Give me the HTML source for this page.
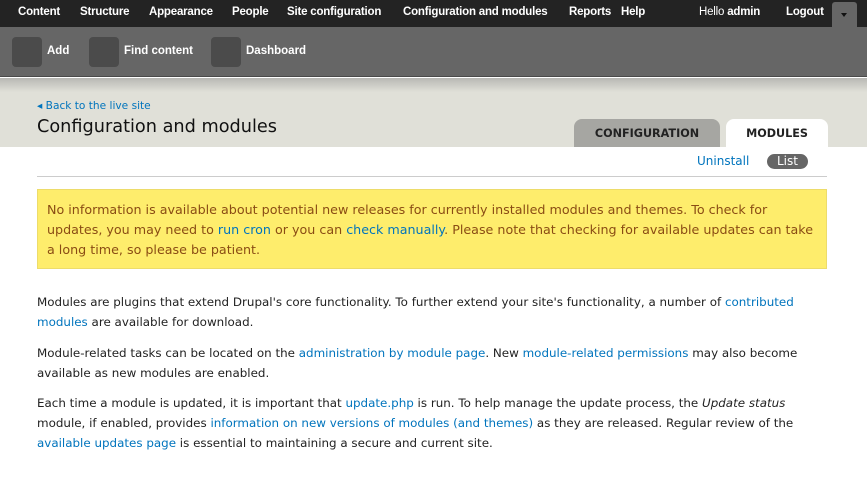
<!DOCTYPE html>
<html><head><meta charset="utf-8">
<style>
*{margin:0;padding:0;box-sizing:border-box}
body{width:867px;height:484px;overflow:hidden;background:#fff;font-family:"DejaVu Sans","Liberation Sans",sans-serif;position:relative}
.abs{position:absolute;white-space:nowrap}
#top{position:absolute;left:0;top:0;width:867px;height:27px;background:#232323}
#top span{position:absolute;top:6px;color:#fff;font:bold 11.5px "Liberation Sans",sans-serif;letter-spacing:-0.2px}
#tb{position:absolute;left:0;top:27px;width:867px;height:50px;background:#666;border-bottom:1px solid #4a4a4a}
.sq{position:absolute;top:10px;width:30px;height:30px;background:#4b4b4b;border-radius:4px}
#tb span{position:absolute;top:18px;color:#fff;font:bold 11.5px "Liberation Sans",sans-serif}
#hdr{position:absolute;left:0;top:78px;width:867px;height:69px;background:linear-gradient(#b8b8b4 0,#e0e0d8 14px,#e0e0d8 100%)}
a,.l{color:#0074bd;text-decoration:none}
.tab{position:absolute;top:119px;height:28px;border-radius:8px 8px 0 0;font:bold 11.2px "DejaVu Sans",sans-serif;text-align:center;line-height:30px;color:#222}
p{position:absolute;left:37px;font-size:11.9px;line-height:20px;color:#222;white-space:nowrap}
</style></head><body>
<div id="top">
<span style="left:18px">Content</span>
<span style="left:80px">Structure</span>
<span style="left:149px">Appearance</span>
<span style="left:232px">People</span>
<span style="left:287px">Site configuration</span>
<span style="left:403px">Configuration and modules</span>
<span style="left:569px">Reports</span>
<span style="left:621px">Help</span>
<span style="left:699px;font-weight:normal">Hello <b>admin</b></span>
<span style="left:786px">Logout</span>
<div style="position:absolute;left:832px;top:2px;width:25px;height:25px;background:#666;border-radius:3px 3px 0 0"><div style="position:absolute;left:9px;top:11px;width:0;height:0;border-left:3.5px solid transparent;border-right:3.5px solid transparent;border-top:4px solid #111"></div></div>
</div>
<div id="tb">
<div class="sq" style="left:12px"></div><span style="left:47px">Add</span>
<div class="sq" style="left:89px"></div><span style="left:124px">Find content</span>
<div class="sq" style="left:211px"></div><span style="left:246px">Dashboard</span>
</div>
<div id="hdr"></div>
<div class="abs" style="left:37px;top:100px;font-size:10.6px;color:#0074bd">&#9666; Back to the live site</div>
<div class="abs" style="left:37px;top:117px;font-size:17.7px;color:#111">Configuration and modules</div>
<div class="tab" style="left:574px;width:146px;background:#a6a6a2">CONFIGURATION</div>
<div class="tab" style="left:726px;width:102px;background:#fff">MODULES</div>
<div class="abs l" style="left:697px;top:154px;font-size:12px">Uninstall</div>
<div class="abs" style="left:767px;top:154px;width:41px;height:15px;border-radius:8px;background:#666;color:#fff;font-size:12px;text-align:center;line-height:15px">List</div>
<div style="position:absolute;left:37px;top:176px;width:790px;height:1px;background:#ccc"></div>
<div style="position:absolute;left:37px;top:189px;width:790px;height:80px;background:#feed6c;border:1px solid #eddc6a"></div>
<p style="top:200px;left:47px;color:#8a4c14;font-size:12.7px">No information is available about potential new releases for currently installed modules and themes. To check for<br>updates, you may need to <a>run cron</a> or you can <a>check manually</a>. Please note that checking for available updates can take<br>a long time, so please be patient.</p>
<p style="top:292px">Modules are plugins that extend Drupal's core functionality. To further extend your site's functionality, a number of <a>contributed</a><br><a>modules</a> are available for download.</p>
<p style="top:343px">Module-related tasks can be located on the <a>administration by module page</a>. New <a>module-related permissions</a> may also become<br>available as new modules are enabled.</p>
<p style="top:393px">Each time a module is updated, it is important that <a>update.php</a> is run. To help manage the update process, the <i>Update status</i><br>module, if enabled, provides <a>information on new versions of modules (and themes)</a> as they are released. Regular review of the<br><a>available updates page</a> is essential to maintaining a secure and current site.</p>
</body></html>
